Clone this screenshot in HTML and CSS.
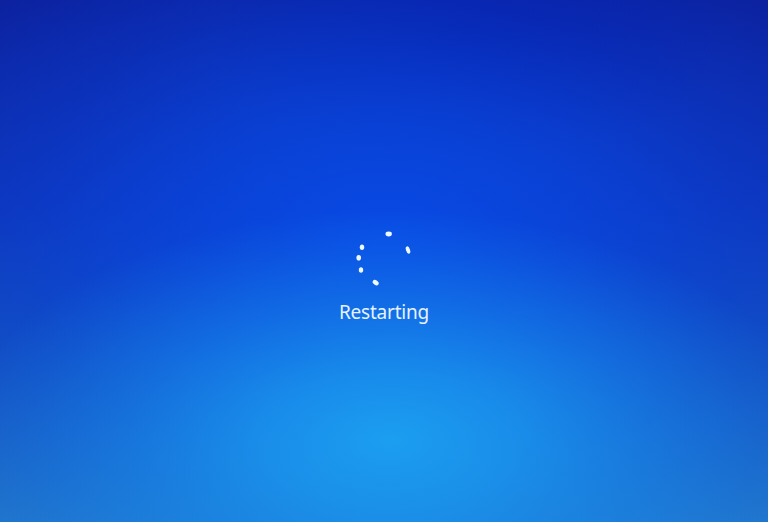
FILE: index.html
```html
<!DOCTYPE html>
<html lang="en">
<head>
<meta charset="utf-8">
<title>Restarting</title>
<link rel="stylesheet" href="styles.css">
</head>
<body>
<main class="screen">
  <div class="status">
    <svg class="spinner" width="60" height="60" viewBox="0 0 60 60" aria-hidden="true">
      <defs>
        <filter id="glow" x="-50%" y="-50%" width="200%" height="200%">
          <feGaussianBlur stdDeviation="0.6"/>
        </filter>
      </defs>
      <g fill="#eef8ff" filter="url(#glow)">
        <ellipse cx="34.7" cy="6" rx="3.2" ry="2.4"/>
        <ellipse cx="54" cy="22" rx="2" ry="3.8" transform="rotate(-18 54 22)"/>
        <ellipse cx="8" cy="19.3" rx="2.2" ry="2.7"/>
        <ellipse cx="4.7" cy="29.7" rx="2.3" ry="2.8"/>
        <ellipse cx="7" cy="42" rx="2.2" ry="2.8"/>
        <ellipse cx="21.7" cy="54.7" rx="3.3" ry="2.3" transform="rotate(35 21.7 54.7)"/>
      </g>
    </svg>
    <p class="label">Restarting</p>
  </div>
</main>
</body>
</html>
```

FILE: styles.css
```css
html, body {
  margin: 0;
  padding: 0;
  width: 100%;
  height: 100%;
  overflow: hidden;
}
.screen {
  width: 768px;
  height: 522px;
  display: flex;
  justify-content: center;
  background:
    radial-gradient(ellipse 430px 230px at 390px 440px,
      rgba(28,162,242,0.95) 0%,
      rgba(28,162,242,0.72) 30%,
      rgba(28,162,242,0.38) 60%,
      rgba(28,162,242,0.12) 85%,
      rgba(28,162,242,0) 100%),
    radial-gradient(ellipse 560px 380px at 384px 240px,
      rgba(8,76,232,0.95) 0%,
      rgba(8,72,228,0.7) 35%,
      rgba(8,66,224,0.35) 65%,
      rgba(8,60,220,0) 100%),
    radial-gradient(ellipse 260px 120px at 470px 40px, rgba(0,10,150,0.45), rgba(0,10,150,0) 100%),
    linear-gradient(180deg, #0c1f9a 0%, #0f34b4 40%, #1450bc 65%, #2074cc 100%);
}
.status {
  display: flex;
  flex-direction: column;
  align-items: center;
  padding-top: 228px;
}
.spinner {
  display: block;
}
.label {
  margin: 12px 0 0 0;
  font-family: "Noto Sans", "Open Sans", sans-serif;
  font-size: 19px;
  line-height: 24px;
  color: #e6f2ff;
  letter-spacing: -0.2px;
}
```
